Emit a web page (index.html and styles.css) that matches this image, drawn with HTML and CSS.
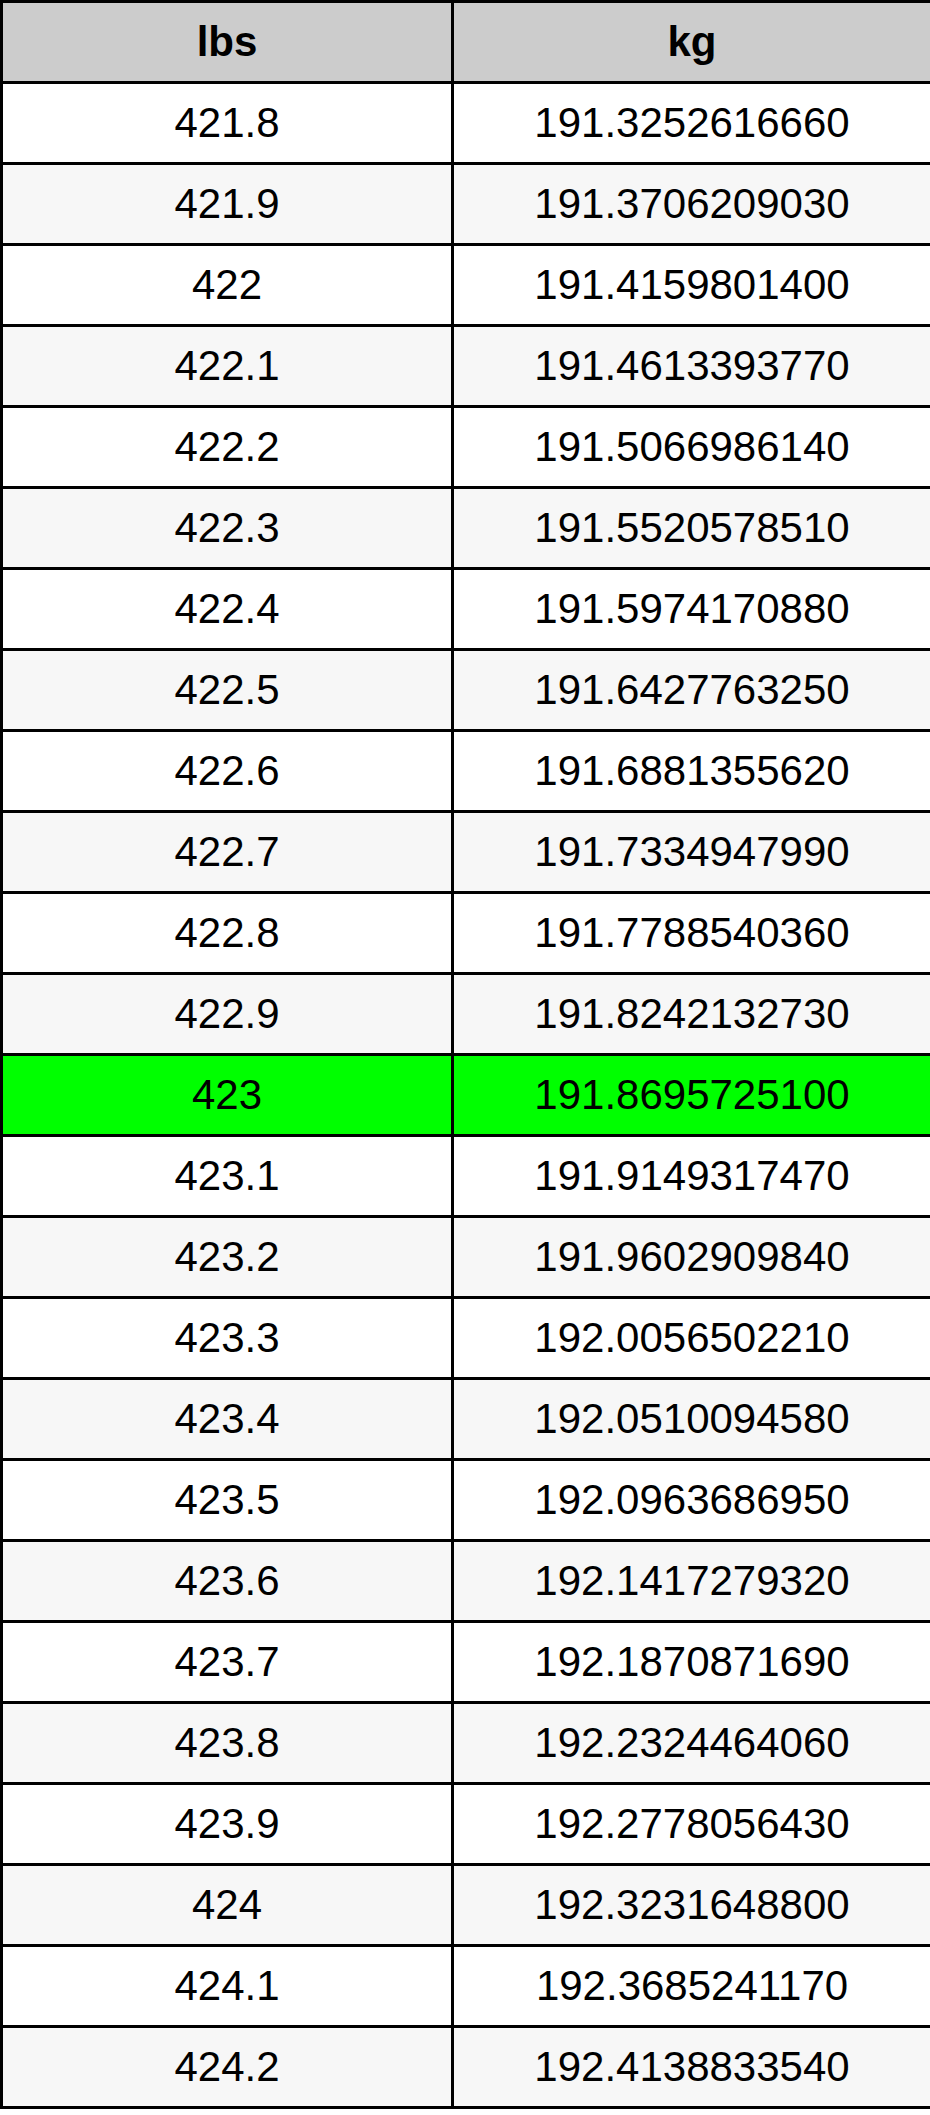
FILE: index.html
```html
<!DOCTYPE html>
<html>
<head>
<meta charset="utf-8">
<link rel="stylesheet" href="styles.css">
</head>
<body>
<table class="conv">
<colgroup><col class="c1"><col class="c2"></colgroup>
<thead>
<tr><th>lbs</th><th>kg</th></tr>
</thead>
<tbody>
<tr><td>421.8</td><td>191.3252616660</td></tr>
<tr class="alt"><td>421.9</td><td>191.3706209030</td></tr>
<tr><td>422</td><td>191.4159801400</td></tr>
<tr class="alt"><td>422.1</td><td>191.4613393770</td></tr>
<tr><td>422.2</td><td>191.5066986140</td></tr>
<tr class="alt"><td>422.3</td><td>191.5520578510</td></tr>
<tr><td>422.4</td><td>191.5974170880</td></tr>
<tr class="alt"><td>422.5</td><td>191.6427763250</td></tr>
<tr><td>422.6</td><td>191.6881355620</td></tr>
<tr class="alt"><td>422.7</td><td>191.7334947990</td></tr>
<tr><td>422.8</td><td>191.7788540360</td></tr>
<tr class="alt"><td>422.9</td><td>191.8242132730</td></tr>
<tr class="hl"><td>423</td><td>191.8695725100</td></tr>
<tr><td>423.1</td><td>191.9149317470</td></tr>
<tr class="alt"><td>423.2</td><td>191.9602909840</td></tr>
<tr><td>423.3</td><td>192.0056502210</td></tr>
<tr class="alt"><td>423.4</td><td>192.0510094580</td></tr>
<tr><td>423.5</td><td>192.0963686950</td></tr>
<tr class="alt"><td>423.6</td><td>192.1417279320</td></tr>
<tr><td>423.7</td><td>192.1870871690</td></tr>
<tr class="alt"><td>423.8</td><td>192.2324464060</td></tr>
<tr><td>423.9</td><td>192.2778056430</td></tr>
<tr class="alt"><td>424</td><td>192.3231648800</td></tr>
<tr><td>424.1</td><td>192.3685241170</td></tr>
<tr class="alt"><td>424.2</td><td>192.4138833540</td></tr>
</tbody>
</table>
</body>
</html>
```
FILE: styles.css
```css
html, body {
  margin: 0;
  padding: 0;
  background: #ffffff;
}
.conv {
  width: 930px;
  border-collapse: collapse;
  table-layout: fixed;
  border: 3px solid #000;
  font-family: "Liberation Sans", Arial, sans-serif;
  font-size: 42px;
  color: #000;
}
.conv .c1 { width: 451px; }
.conv .c2 { width: 479px; }
.conv th, .conv td {
  border: 3px solid #000;
  padding: 0;
  height: 78px;
  text-align: center;
  vertical-align: middle;
  line-height: 1;
}
.conv th {
  background: #cccccc;
  font-weight: bold;
}
.conv td { background: #ffffff; }
.conv tr.alt td { background: #f7f7f7; }
.conv tr.hl td { background: #00ff00; }
```
